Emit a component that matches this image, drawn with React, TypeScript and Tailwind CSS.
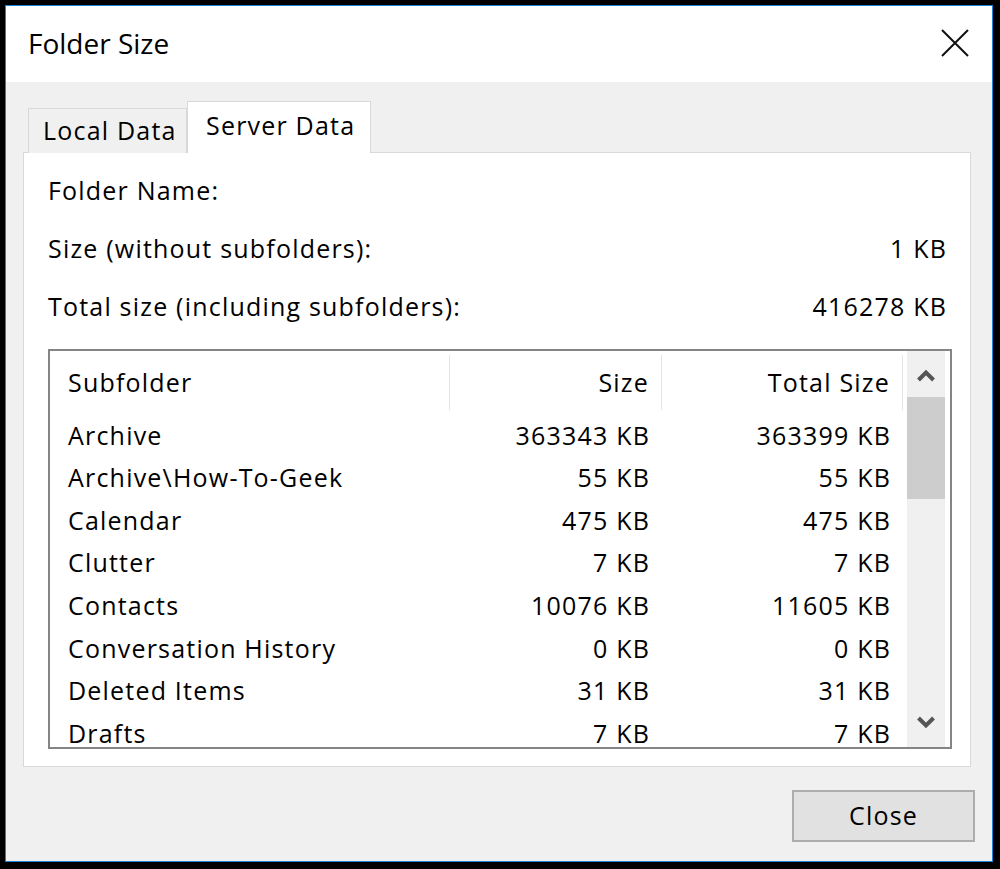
import React from "react";

const rows = [
  { name: "Archive", size: "363343 KB", total: "363399 KB" },
  { name: "Archive\\How-To-Geek", size: "55 KB", total: "55 KB" },
  { name: "Calendar", size: "475 KB", total: "475 KB" },
  { name: "Clutter", size: "7 KB", total: "7 KB" },
  { name: "Contacts", size: "10076 KB", total: "11605 KB" },
  { name: "Conversation History", size: "0 KB", total: "0 KB" },
  { name: "Deleted Items", size: "31 KB", total: "31 KB" },
  { name: "Drafts", size: "7 KB", total: "7 KB" },
];

function Chevron({ down }: { down?: boolean }) {
  return (
    <svg width="20" height="13" viewBox="0 0 20 13" className={down ? "rotate-180" : ""}>
      <path d="M2.5 11 L10 3.5 L17.5 11" fill="none" stroke="#555" strokeWidth="4" />
    </svg>
  );
}

export default function App() {
  return (
    <div
      className="w-[1000px] h-[869px] bg-black pt-[5px] pl-[5px] pr-[7px] pb-[7px] text-black"
      style={{ fontFamily: '"Segoe UI", "Open Sans", sans-serif' }}
    >
      <div className="h-full flex flex-col border border-[#1883d7]">
        {/* title bar */}
        <div className="h-[76px] bg-white flex items-center justify-between pl-[22px] pr-[23px]">
          <span className="text-[28px] leading-none -mt-[3px]">Folder Size</span>
          <svg width="28" height="28" viewBox="0 0 28 28" className="-mt-[2px]">
            <path d="M1 1 L27 27 M27 1 L1 27" stroke="#111" strokeWidth="2" />
          </svg>
        </div>

        {/* body */}
        <div className="flex-1 bg-[#f0f0f0] px-[17px] pt-[19px] pb-[19px] flex flex-col text-[25px] tracking-[1.2px]">
          {/* tabs */}
          <div className="flex items-end ml-[5px] h-[52px] -mb-px relative z-10">
            <div className="h-[45px] w-[159px] border border-b-0 border-[#d9d9d9] bg-[#f0f0f0] pl-[14px] flex items-center">
              Local Data
            </div>
            <div className="h-[52px] w-[184px] border border-b-0 border-[#d9d9d9] bg-white pl-[18px] pb-[4px] flex items-center">
              Server Data
            </div>
          </div>

          {/* panel */}
          <div className="h-[615px] mr-[4px] border border-[#d9d9d9] bg-white pl-[24px] pr-[18px] pt-[20px]">
            <div className="h-[36px] flex items-center">Folder Name:</div>
            <div className="h-[58px] pt-[22px] flex items-center justify-between pr-[5px]">
              <span>Size (without subfolders):</span>
              <span>1 KB</span>
            </div>
            <div className="h-[58px] pt-[22px] flex items-center justify-between pr-[5px]">
              <span>Total size (including subfolders):</span>
              <span>416278 KB</span>
            </div>

            {/* list */}
            <div className="mt-[24px] h-[400px] border-2 border-[#858585] flex overflow-hidden">
              <div className="flex-1 flex flex-col">
                <div className="h-[63px] flex shrink-0">
                  <div className="w-[400px] pl-[18px] flex items-center border-r border-[#e5e5e5] my-[4px]">
                    Subfolder
                  </div>
                  <div className="w-[212px] pr-[12px] flex items-center justify-end border-r border-[#e5e5e5] my-[4px]">
                    Size
                  </div>
                  <div className="w-[241px] pr-[12px] flex items-center justify-end border-r border-[#e5e5e5] my-[4px]">
                    Total Size
                  </div>
                </div>
                {rows.map((r) => (
                  <div key={r.name} className="h-[42.6px] flex items-center shrink-0">
                    <div className="w-[400px] pl-[18px] whitespace-nowrap">{r.name}</div>
                    <div className="w-[212px] pr-[12px] text-right">{r.size}</div>
                    <div className="w-[241px] pr-[12px] text-right">{r.total}</div>
                  </div>
                ))}
              </div>
              {/* scrollbar */}
              <div className="w-[38px] mr-[5px] bg-[#f0f0f0] flex flex-col">
                <div className="h-[46px] flex items-center justify-center pt-[2px]">
                  <Chevron />
                </div>
                <div className="h-[102px] bg-[#cdcdcd]" />
                <div className="flex-1" />
                <div className="h-[46px] flex items-center justify-center pb-[4px]">
                  <Chevron down />
                </div>
              </div>
            </div>
          </div>

          {/* footer */}
          <div className="mt-auto flex justify-end">
            <button className="w-[183px] h-[52px] bg-[#e1e1e1] border-2 border-[#adadad] tracking-[1.2px]">
              Close
            </button>
          </div>
        </div>
      </div>
    </div>
  );
}
